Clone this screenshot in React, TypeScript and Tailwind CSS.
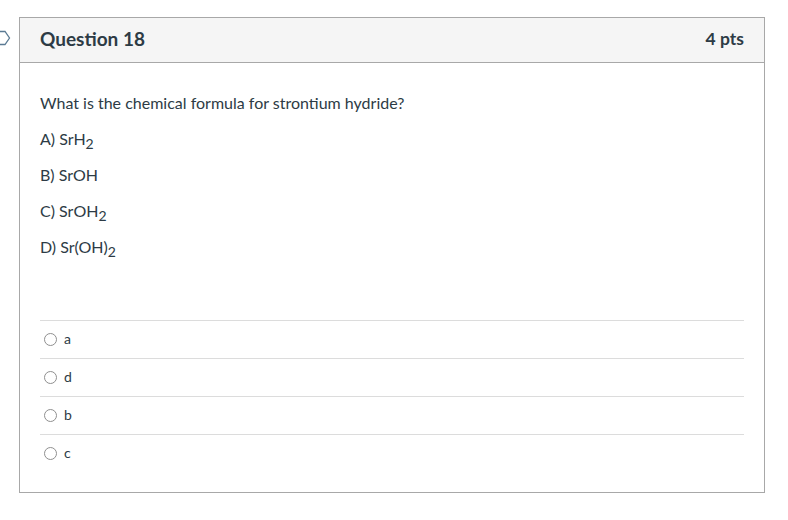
import React from "react";

const Sub = ({ children }: { children: React.ReactNode }) => (
  <span className="relative top-[4px] text-[14px] leading-none">{children}</span>
);

export default function App() {
  const answers = ["a", "d", "b", "c"];
  return (
    <div className="relative w-[788px] h-[520px] bg-white font-['Lato','Noto_Sans',sans-serif] text-[#2d3b45]">
      <svg className="absolute left-0 top-[30px]" width="12" height="16" viewBox="0 0 12 16">
        <path d="M-4 1.5 L5 1.5 L9.5 8 L5 14.5 L-4 14.5" fill="none" stroke="#5a7a93" strokeWidth="1.3" />
      </svg>
      <div className="pt-[17px] pl-[19px] w-[765px]">
        <div className="border border-[#a8a8a8]">
          <div className="flex items-center justify-between h-[45px] bg-[#f5f5f5] border-b border-[#a8a8a8] px-5">
            <span className="relative top-[-1px] text-[19px] font-bold text-[#2d3b45]">Question 18</span>
            <span className="relative top-[-1px] text-[17.5px] font-bold text-[#2d3b45]">4 pts</span>
          </div>
          <div className="px-5 pt-[28px] pb-5">
            <div className="text-[16px] leading-[24px] flex flex-col gap-[12px]">
              <p>What is the chemical formula for strontium hydride?</p>
              <p>A) SrH<Sub>2</Sub></p>
              <p>B) SrOH</p>
              <p>C) SrOH<Sub>2</Sub></p>
              <p>D) Sr(OH)<Sub>2</Sub></p>
            </div>
            <div className="mt-[61px]">
              {answers.map((a) => (
                <div key={a} className="flex items-center h-[38px] border-t border-[#dcdcdc] pl-[4px]">
                  <span className="w-[13px] h-[13px] rounded-full border border-[#8f8f8f] bg-white"></span>
                  <span className="ml-[7px] text-[14px] text-[#2d3b45] relative top-[-1px]">{a}</span>
                </div>
              ))}
            </div>
          </div>
        </div>
      </div>
    </div>
  );
}
